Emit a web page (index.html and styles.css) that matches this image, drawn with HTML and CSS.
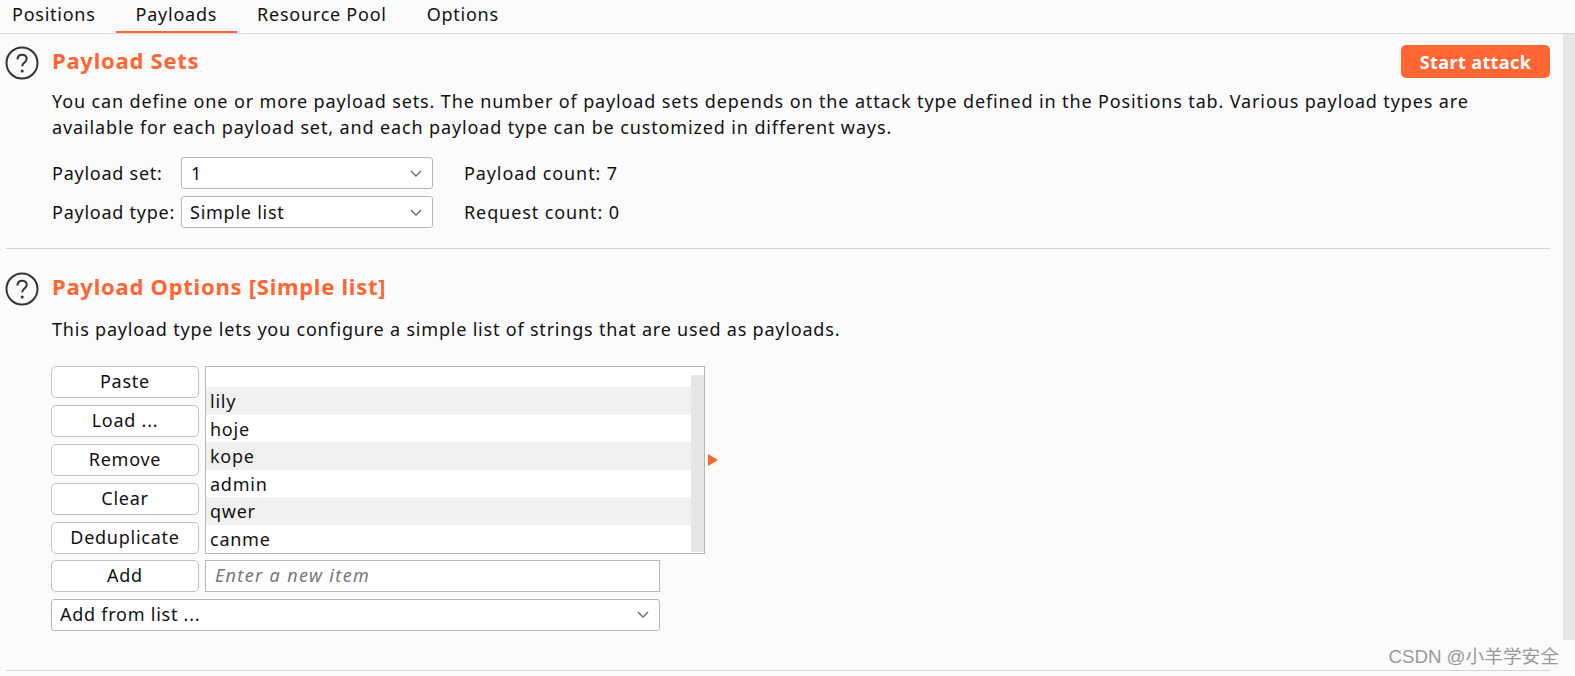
FILE: index.html
```html
<!DOCTYPE html>
<html lang="en">
<head>
  <meta charset="UTF-8">
  <meta name="viewport" content="width=device-width, initial-scale=1.0">
  <title>Intruder - Payloads</title>
  <link rel="stylesheet" href="styles.css">
</head>
<body>
  <nav class="tabs">
    <a class="tab">Positions</a>
    <a class="tab active">Payloads</a>
    <a class="tab">Resource Pool</a>
    <a class="tab">Options</a>
  </nav>
  <div class="page">
    <main class="content">
      <section class="panel sets">
        <div class="panel-head">
          <svg class="help" viewBox="0 0 34 34"><circle cx="17" cy="17" r="15.5"/><path d="M12.5 13.5c0-3 2-4.800 4.700-4.800 2.600 0 4.500 1.700 4.500 4 0 3.600-4.500 3.900-4.500 7.600"/><circle class="dot" cx="17.200" cy="25" r="1.500"/></svg>
          <h2>Payload Sets</h2>
          <button class="start">Start attack</button>
        </div>
        <p class="desc">You can define one or more payload sets. The number of payload sets depends on the attack type defined in the Positions tab. Various payload types are available for each payload set, and each payload type can be customized in different ways.</p>
        <div class="set-form">
          <label>Payload set:</label>
          <div class="select first"><span>1</span><svg class="chev" viewBox="0 0 12 7"><path d="M1 1l5 5 5-5"/></svg></div>
          <span class="count">Payload count: 7</span>
          <label>Payload type:</label>
          <div class="select"><span>Simple list</span><svg class="chev" viewBox="0 0 12 7"><path d="M1 1l5 5 5-5"/></svg></div>
          <span class="count">Request count: 0</span>
        </div>
      </section>
      <section class="panel options">
        <div class="panel-head">
          <svg class="help" viewBox="0 0 34 34"><circle cx="17" cy="17" r="15.5"/><path d="M12.5 13.5c0-3 2-4.800 4.700-4.800 2.600 0 4.500 1.700 4.500 4 0 3.600-4.500 3.900-4.500 7.600"/><circle class="dot" cx="17.200" cy="25" r="1.500"/></svg>
          <h2>Payload Options [Simple list]</h2>
        </div>
        <p class="desc">This payload type lets you configure a simple list of strings that are used as payloads.</p>
        <div class="list-editor">
          <div class="list-row">
            <div class="btn-col">
              <button class="btn">Paste</button>
              <button class="btn">Load ...</button>
              <button class="btn">Remove</button>
              <button class="btn">Clear</button>
              <button class="btn">Deduplicate</button>
            </div>
            <div class="list">
              <div class="items">
                <div class="item blank"></div>
                <div class="item odd">lily</div>
                <div class="item">hoje</div>
                <div class="item odd">kope</div>
                <div class="item">admin</div>
                <div class="item odd">qwer</div>
                <div class="item">canme</div>
              </div>
              <div class="list-scroll"></div>
            </div>
            <span class="marker"></span>
          </div>
          <div class="add-row">
            <button class="btn">Add</button>
            <div class="new-item">Enter a new item</div>
          </div>
          <div class="select from-list"><span>Add from list ...</span><svg class="chev" viewBox="0 0 12 7"><path d="M1 1l5 5 5-5"/></svg></div>
        </div>
      </section>
    </main>
    <div class="scrollbar"></div>
  </div>
  <div class="watermark">CSDN @小羊学安全</div>
</body>
</html>
```

FILE: styles.css
```css
html, body {
  margin: 0; padding: 0;
  height: 676px;
  overflow: hidden;
  background: #fbfbfb;
  color: #111;
  font-family: "Noto Sans", "Noto Sans CJK SC", sans-serif;
  font-size: 18px;
  letter-spacing: 0.75px;
}
body { position: relative; }
.tabs {
  display: flex;
  height: 33px;
  border-bottom: 1px solid #d8dada;
}
.tab { height: 33px; line-height: 29px; padding: 0 20px; box-sizing: border-box; white-space: nowrap; }
.tab:first-child { padding-left: 12px; }
.tab.active { border-bottom: 2px solid #ff6633; }
.page { display: flex; height: 642px; }
.content { flex: 1; padding: 1px 13px 0 6px; }
.scrollbar { width: 12px; height: 606px; background: #e6e6e6; }
.panel { border-bottom: 1px solid #d4d4d4; }
.sets { height: 213px; }
.options { height: 421px; }
.panel-head { display: flex; align-items: center; height: 33px; padding-top: 12px; }
.sets .panel-head { padding-top: 11px; }
.options .panel-head { padding-top: 23px; }
.help { width: 34px; height: 34px; flex: none; margin-left: -1px; fill: none; stroke: #333; stroke-width: 2; }
.help .dot { fill: #333; stroke: none; }
h2 { margin: 0 0 5px 13px; font-size: 22px; font-weight: 700; color: #ff6633; line-height: 30px; }
.start {
  margin: 0 0 2px auto;
  width: 149px; height: 33px;
  background: #ff6633; color: #fff; border: 0; border-radius: 5px;
  font: 700 18px "Noto Sans", sans-serif;
  letter-spacing: 0.4px;
}
.desc { margin: 9px 60px 0 46px; line-height: 26px; letter-spacing: 0.87px; }
.options .desc { margin-top: 11px; letter-spacing: 0.8px; }
.set-form {
  display: grid;
  grid-template-columns: 129px 252px auto;
  grid-auto-rows: 32px;
  row-gap: 7px;
  align-items: center;
  margin: 17px 0 0 46px;
}
.select {
  display: flex; align-items: center; justify-content: space-between;
  height: 32px; box-sizing: border-box;
  padding: 0 10px 0 8px;
  background: #fff; border: 1px solid #b9b6b6; border-radius: 3px;
}
.select.first { padding-left: 9px; }
.chev { width: 12px; height: 7px; fill: none; stroke: #666; stroke-width: 1.300; }
.count { margin-left: 31px; letter-spacing: 0.9px; }
.list-editor { margin: 24px 0 0 45px; width: 700px; }
.list-row { display: flex; align-items: stretch; }
.btn-col { display: flex; flex-direction: column; gap: 7px; }
.btn {
  display: block;
  width: 148px; height: 32px; padding: 0 0 2px;
  background: #fff; color: #111;
  border: 1px solid #c4c1c1; border-radius: 5px;
  font: 18px "Noto Sans", sans-serif;
  letter-spacing: 0.75px;
}
.list {
  display: flex;
  width: 500px; height: 188px; margin-left: 6px; box-sizing: border-box;
  background: #fff; border: 1px solid #b9b6b6;
}
.items { flex: 1; }
.item { height: 27.500px; line-height: 28px; padding-left: 4px; }
.item.blank { height: 20px; }
.item.odd { background: #f1f1f1; }
.list-scroll { width: 13px; height: 177px; margin-top: 8px; background: #e6e6e6; }
.marker {
  align-self: center; margin: 0 0 0 3px;
  border-left: 10px solid #ff6633;
  border-top: 6px solid transparent;
  border-bottom: 6px solid transparent;
}
.add-row { display: flex; gap: 6px; margin-top: 6px; }
.new-item {
  width: 455px; height: 32px; box-sizing: border-box;
  padding-left: 9px; line-height: 29px;
  background: #fff; border: 1px solid #b9b6b6;
  color: #777; font-style: italic;
  letter-spacing: 1.35px;
}
.from-list { width: 609px; margin-top: 7px; padding-bottom: 2px; }
.watermark {
  position: absolute; right: 16px; top: 645px;
  font-family: "Liberation Sans", "Noto Sans CJK SC", sans-serif;
  font-size: 18.700px; line-height: 24px;
  letter-spacing: 0;
  color: #9a9a9a;
  background: #fbfbfb;
}
```
